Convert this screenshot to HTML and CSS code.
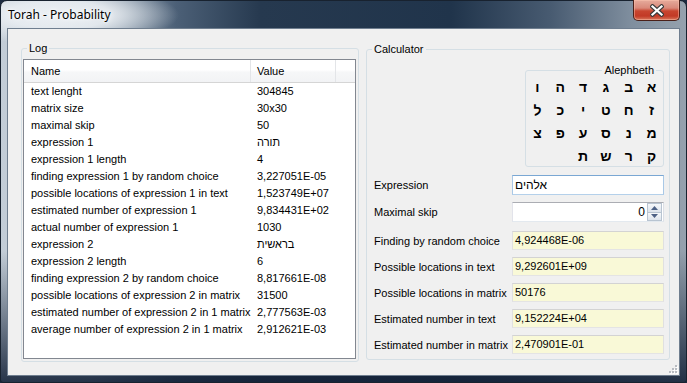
FILE: index.html
```html
<!DOCTYPE html>
<html lang="en">
<head>
  <meta charset="UTF-8" />
  <title>Torah - Probability</title>
  <link rel="stylesheet" href="styles.css">
</head>
<body>
  <div class="window">
    <!-- Title bar -->
    <div class="titlebar">
      <span class="title">Torah - Probability</span>
      <span class="close-btn">
        <svg width="14" height="13" viewBox="0 0 14 13">
          <path d="M2.5 2.5 L11.5 10.5 M11.5 2.5 L2.5 10.5" stroke="#3b3b3b" stroke-width="4.4" stroke-linecap="square" fill="none"/>
          <path d="M2.5 2.5 L11.5 10.5 M11.5 2.5 L2.5 10.5" stroke="#fff" stroke-width="2.2" stroke-linecap="square" fill="none"/>
        </svg>
      </span>
    </div>

    <div class="client">
      <!-- Log -->
      <fieldset class="group log-group">
        <legend>Log</legend>
        <div class="listview">
          <div class="lv-header">
            <div class="lv-col col-name">Name</div>
            <div class="lv-col col-value">Value</div>
            <div class="lv-col col-fill"></div>
          </div>
          <div class="lv-row"><span class="col-name">text lenght</span><span class="col-value">304845</span></div>
          <div class="lv-row"><span class="col-name">matrix size</span><span class="col-value">30x30</span></div>
          <div class="lv-row"><span class="col-name">maximal skip</span><span class="col-value">50</span></div>
          <div class="lv-row"><span class="col-name">expression 1</span><span class="col-value">תורה</span></div>
          <div class="lv-row"><span class="col-name">expression 1 length</span><span class="col-value">4</span></div>
          <div class="lv-row"><span class="col-name">finding expression 1 by random choice</span><span class="col-value">3,227051E-05</span></div>
          <div class="lv-row"><span class="col-name">possible locations of expression 1 in text</span><span class="col-value">1,523749E+07</span></div>
          <div class="lv-row"><span class="col-name">estimated number of expression 1</span><span class="col-value">9,834431E+02</span></div>
          <div class="lv-row"><span class="col-name">actual number of expression 1</span><span class="col-value">1030</span></div>
          <div class="lv-row"><span class="col-name">expression 2</span><span class="col-value">בראשית</span></div>
          <div class="lv-row"><span class="col-name">expression 2 length</span><span class="col-value">6</span></div>
          <div class="lv-row"><span class="col-name">finding expression 2 by random choice</span><span class="col-value">8,817661E-08</span></div>
          <div class="lv-row"><span class="col-name">possible locations of expression 2 in matrix</span><span class="col-value">31500</span></div>
          <div class="lv-row"><span class="col-name">estimated number of expression 2 in 1 matrix</span><span class="col-value">2,777563E-03</span></div>
          <div class="lv-row"><span class="col-name">average number of expression 2 in 1 matrix</span><span class="col-value">2,912621E-03</span></div>
        </div>
      </fieldset>

      <!-- Calculator -->
      <fieldset class="group calc-group">
        <legend>Calculator</legend>

        <fieldset class="group alephbeth" dir="rtl">
          <legend>Alephbeth</legend>
          <div class="letters">
            <span>א</span><span>ב</span><span>ג</span><span>ד</span><span>ה</span><span>ו</span>
            <span>ז</span><span>ח</span><span>ט</span><span>י</span><span>כ</span><span>ל</span>
            <span>מ</span><span>נ</span><span>ס</span><span>ע</span><span>פ</span><span>צ</span>
            <span>ק</span><span>ר</span><span>ש</span><span>ת</span>
          </div>
        </fieldset>

        <div class="calc-row row-expression">
          <span class="label">Expression</span>
          <div class="textbox focused">אלהים</div>
        </div>
        <div class="calc-row row-skip">
          <span class="label">Maximal skip</span>
          <div class="textbox spinbox">
            <span class="spin-value">0</span>
            <span class="spin">
              <span class="spin-btn"><svg width="7" height="4" viewBox="0 0 7 4"><path d="M0 4 L3.5 0 L7 4Z" fill="#4d6185"/></svg></span>
              <span class="spin-btn"><svg width="7" height="4" viewBox="0 0 7 4"><path d="M0 0 L3.5 4 L7 0Z" fill="#4d6185"/></svg></span>
            </span>
          </div>
        </div>
        <div class="calc-row row-result first">
          <span class="label">Finding by random choice</span>
          <div class="textbox readonly">4,924468E-06</div>
        </div>
        <div class="calc-row row-result">
          <span class="label">Possible locations in text</span>
          <div class="textbox readonly">9,292601E+09</div>
        </div>
        <div class="calc-row row-result">
          <span class="label">Possible locations in matrix</span>
          <div class="textbox readonly">50176</div>
        </div>
        <div class="calc-row row-result">
          <span class="label">Estimated number in text</span>
          <div class="textbox readonly">9,152224E+04</div>
        </div>
        <div class="calc-row row-result">
          <span class="label">Estimated number in matrix</span>
          <div class="textbox readonly">2,470901E-01</div>
        </div>
      </fieldset>

      <!-- size grip -->
      <svg class="grip" width="9" height="9" viewBox="0 0 9 9">
        <g fill="#fff">
          <rect x="7" y="1" width="2" height="2"/><rect x="4" y="4" width="2" height="2"/><rect x="7" y="4" width="2" height="2"/>
          <rect x="1" y="7" width="2" height="2"/><rect x="4" y="7" width="2" height="2"/><rect x="7" y="7" width="2" height="2"/>
        </g>
        <g fill="#b8bcc2">
          <rect x="6" y="0" width="2" height="2"/><rect x="3" y="3" width="2" height="2"/><rect x="6" y="3" width="2" height="2"/>
          <rect x="0" y="6" width="2" height="2"/><rect x="3" y="6" width="2" height="2"/><rect x="6" y="6" width="2" height="2"/>
        </g>
      </svg>
    </div>
  </div>
</body>
</html>
```

FILE: styles.css
```css
/* Janela estilo Windows 7 */
* {
  box-sizing: border-box;
}
body {
  margin: 0;
  width: 687px;
  height: 383px;
  overflow: hidden;
  background: #1b2a40;
  font-family: "Liberation Sans", Arial, sans-serif;
  font-size: 11px;
  color: #000;
}
.window {
  width: 687px;
  height: 383px;
  display: flex;
  flex-direction: column;
  padding: 0 6px 6px 6px;
  border: 1px solid #18222f;
  border-radius: 7px 7px 3px 3px;
  background:
    radial-gradient(ellipse 120px 30px at 58px 14px, rgba(236,240,244,1) 0%, rgba(236,240,244,0.85) 45%, rgba(236,240,244,0) 100%),
    linear-gradient(to bottom, rgba(20,34,56,0) 0, rgba(20,34,56,0) 250px, rgba(20,34,56,0.9) 383px),
    linear-gradient(to right, #c3cdd7 0, #aab8c5 90px, #4c6077 175px, #26394f 260px, #20344b 450px, #485b71 550px, #7f8e9e 630px, #96a2ae 687px);
}

/* Barra de título */
.titlebar {
  height: 27px;
  display: flex;
  align-items: flex-start;
  justify-content: space-between;
}
.title {
  margin: 6px 0 0 1px;
  font-family: "Noto Sans", "Open Sans", sans-serif;
  font-size: 12px;
  line-height: 16px;
  color: #000;
  text-shadow: 0 0 6px #fff, 0 0 3px #fff;
}
.close-btn {
  width: 47px;
  height: 21px;
  margin-top: -1px;
  display: flex;
  align-items: center;
  justify-content: center;
  border: 1px solid #4a2019;
  border-top: none;
  border-radius: 0 0 5px 5px;
  background: linear-gradient(to bottom, #e6ab9c 0%, #d9897a 40%, #c8452f 55%, #c23a26 80%, #d8775c 100%);
  box-shadow: inset 0 0 0 1px rgba(255,200,180,0.45);
}

/* Área cliente */
.client {
  flex: 1;
  position: relative;
  display: flex;
  align-items: flex-start;
  gap: 7px;
  padding: 12px 9px 0 13px;
  background: #f0f0f0;
  border: 1px solid #6f7e8f;
}
.group {
  margin: 0;
  min-width: 0;
  border: 1px solid #d5dfe5;
  border-radius: 3px;
}
.group legend {
  padding: 0 2px;
  line-height: 14px;
  font-size: 11px;
}
.log-group {
  width: 338px;
  height: 321px;
  padding: 4px 2px 2px 1px;
}
.log-group legend {
  margin-left: 4px;
}

/* ListView */
.listview {
  height: 300px;
  border: 1px solid #828790;
  background: #fff;
}
.lv-header {
  display: flex;
  height: 23px;
  border-bottom: 1px solid #d5d5d5;
  background: linear-gradient(to bottom, #fff 0%, #fff 45%, #f6f7f8 55%, #f2f3f5 100%);
}
.lv-col {
  line-height: 22px;
  border-right: 1px solid #e3e5e8;
}
.lv-header .col-name {
  width: 227px;
  padding-left: 7px;
}
.lv-header .col-value {
  width: 85px;
  padding-left: 6px;
}
.lv-header .col-fill {
  flex: 1;
  border-right: none;
}
.lv-row {
  display: flex;
  height: 17px;
  line-height: 17px;
  white-space: nowrap;
}
.lv-row .col-name {
  width: 227px;
  padding-left: 7px;
}
.lv-row .col-value {
  padding-left: 6px;
}

/* Calculadora */
.calc-group {
  width: 304px;
  height: 318px;
  margin-top: 1px;
  padding: 0 5px 5px 7px;
  display: flex;
  flex-direction: column;
}
.calc-group > legend {
  margin-left: -2px;
}
.alephbeth {
  align-self: flex-end;
  width: 139px;
  height: 104px;
  margin-top: 7px;
  padding: 0;
}
.alephbeth legend {
  margin-right: 7px;
}
.letters {
  display: grid;
  grid-template-columns: repeat(6, 1fr);
  grid-auto-rows: 23px;
  margin-top: -1px;
  font-weight: bold;
  font-size: 14px;
  line-height: 23px;
  text-align: center;
}
.calc-row {
  display: flex;
  align-items: center;
  justify-content: space-between;
  height: 20px;
}
.row-expression {
  margin-top: 8px;
}
.row-skip {
  margin-top: 7px;
}
.row-result {
  height: 19px;
  margin-top: 7px;
}
.row-result.first {
  margin-top: 9px;
}
.textbox {
  width: 152px;
  height: 100%;
  padding: 0 2px;
  line-height: 18px;
  border: 1px solid;
  border-color: #abadb3 #dbdfe6 #e3e9ef #e2e3ea;
  background: #fff;
  white-space: nowrap;
}
.textbox.focused {
  border-color: #7aa7d3 #a9c8e6 #b4d0ea #a9c8e6;
  font-size: 12px;
}
.textbox.readonly {
  padding-left: 2px;
  line-height: 17px;
  border-color: #d3d3d3 #e0e0e0 #e4e4e4 #e0e0e0;
  background: #f9f9d7;
}
.spinbox {
  display: flex;
  align-items: center;
  justify-content: flex-end;
  padding: 0 1px 0 0;
}
.spin-value {
  margin-right: 2px;
  font-size: 12px;
}
.spin {
  display: flex;
  flex-direction: column;
  width: 15px;
  height: 18px;
}
.spin-btn {
  flex: 1;
  display: flex;
  align-items: center;
  justify-content: center;
  border: 1px solid #b8c4d1;
  background: linear-gradient(to bottom, #f6f8fa, #dde4ec);
}
.spin-btn + .spin-btn {
  border-top: none;
}

/* Grip de redimensionamento */
.grip {
  position: absolute;
  right: 1px;
  bottom: 1px;
}
```
